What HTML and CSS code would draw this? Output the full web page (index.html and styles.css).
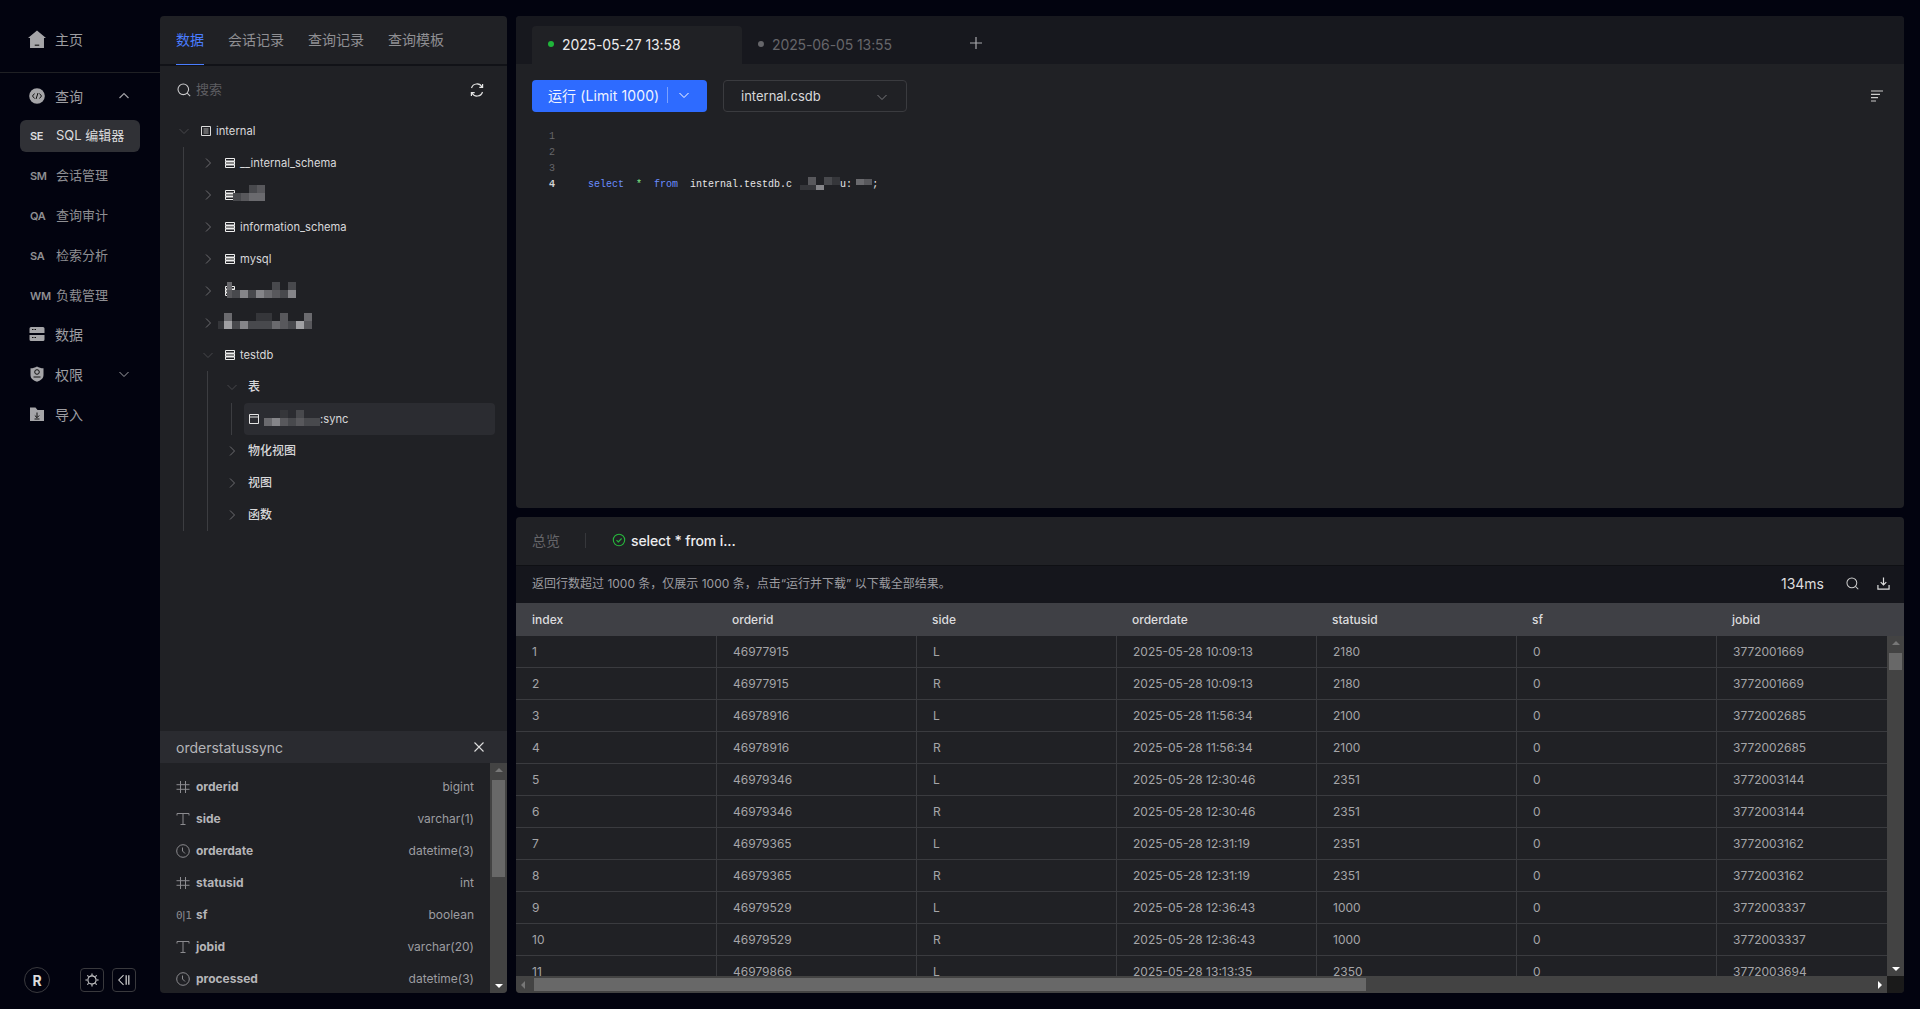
FILE: index.html
```html
<!DOCTYPE html>
<html lang="zh-CN">
<head>
<meta charset="utf-8">
<title>SQL 编辑器</title>
<link rel="stylesheet" href="styles.css">
</head>
<body>
<svg class="sprite" width="0" height="0" aria-hidden="true">
  <symbol id="chev-r" viewBox="0 0 12 12"><path d="M4 1.500 8.500 6 4 10.500" fill="none" stroke="currentColor" stroke-width="1"/></symbol>
  <symbol id="chev-d" viewBox="0 0 12 12"><path d="M1.500 4 6 8.500 10.500 4" fill="none" stroke="currentColor" stroke-width="1"/></symbol>
  <symbol id="chev-u" viewBox="0 0 12 12"><path d="M1.500 8 6 3.500 10.500 8" fill="none" stroke="currentColor" stroke-width="1.200"/></symbol>
  <symbol id="db" viewBox="0 0 10 10"><path d="M.5.500h9v2.500h-9zM.5 3.500h9v3h-9zM.5 7h9v2.500h-9z" fill="none" stroke="#eee" stroke-width="1"/><path d="M1 4h8v2H1z" fill="#888"/></symbol>
  <symbol id="hash" viewBox="0 0 14 14"><path d="M4.500 1v12M9.500 1v12M.5 4.700h13M.5 9.300h13" fill="none" stroke="#8b8b8f" stroke-width="1"/></symbol>
  <symbol id="type" viewBox="0 0 14 14"><path d="M1 3.500V1.500h12v2M7 1.500v11M4.500 12.500h5" fill="none" stroke="#8b8b8f" stroke-width="1"/></symbol>
  <symbol id="clock" viewBox="0 0 14 14"><circle cx="7" cy="7" r="6.300" fill="none" stroke="#8b8b8f" stroke-width="1"/><path d="M6.500 3.500V7l2.500 2.500" fill="none" stroke="#8b8b8f" stroke-width="1"/></symbol>
  <symbol id="search" viewBox="0 0 14 14"><circle cx="6.300" cy="6.300" r="5.300" fill="none" stroke="currentColor" stroke-width="1.100"/><path d="m10.200 10.200 3 3" stroke="currentColor" stroke-width="1.100"/></symbol>
</svg>

<div class="app">
  <aside class="nav">
    <div class="nav-top">
      <a class="nav-item"><svg class="nav-ico nav-home" viewBox="0 0 16 16"><path d="M8 .5 16 7.200h-1.800V16H1.800V7.200H0z" fill="#a5a5a8"/><path d="M6 13h4v1H6z" fill="#111"/></svg><span>主页</span></a>
      <div class="nav-sep"></div>
      <a class="nav-item nav-group"><svg class="nav-ico" viewBox="0 0 16 16"><circle cx="8" cy="8" r="7.800" fill="#a5a5a8"/><path d="M5.500 5.500 3.500 8l2 2.500M10.500 5.500l2 2.500-2 2.500M9 5 7 11" fill="none" stroke="#111" stroke-width="1"/></svg><span>查询</span><svg class="nav-chev"><use href="#chev-u"/></svg></a>
      <a class="nav-sub active"><b>SE</b><span>SQL 编辑器</span></a>
      <a class="nav-sub"><b>SM</b><span>会话管理</span></a>
      <a class="nav-sub"><b>QA</b><span>查询审计</span></a>
      <a class="nav-sub"><b>SA</b><span>检索分析</span></a>
      <a class="nav-sub"><b>WM</b><span>负载管理</span></a>
      <a class="nav-item nav-low"><svg class="nav-ico" viewBox="0 0 16 16"><path d="M2 1h12a1.500 1.500 0 0 1 1.500 1.500V7H.5V2.500A1.500 1.500 0 0 1 2 1zM.5 9h15v4.500A1.500 1.500 0 0 1 14 15H2a1.500 1.500 0 0 1-1.500-1.500z" fill="#a5a5a8"/><path d="M3 3.500h1.500M5.500 3.500H7M3 11.500h1.500M5.500 11.500H7" stroke="#111" stroke-width="1.200"/></svg><span>数据</span></a>
      <a class="nav-item nav-low"><svg class="nav-ico" viewBox="0 0 16 16"><path d="M8 .5c2 1.200 4 1.700 6.500 1.800V9c0 3.500-3 5.700-6.500 6.800C4.500 14.700 1.500 12.500 1.500 9V2.300C4 2.200 6 1.700 8 .5z" fill="#a5a5a8"/><circle cx="8" cy="6" r="2.300" fill="none" stroke="#111"/><path d="M4.500 11h7" stroke="#111"/></svg><span>权限</span><svg class="nav-chev"><use href="#chev-d"/></svg></a>
      <a class="nav-item nav-low"><svg class="nav-ico" viewBox="0 0 16 16"><path d="M1 1.500h5.500L8.500 4H15v11H1z" fill="#a5a5a8"/><path d="M8 6.500v5M5.800 9.500 8 11.700l2.200-2.200M5.500 13h5" fill="none" stroke="#111" stroke-width="1"/></svg><span>导入</span></a>
    </div>
    <div class="nav-foot">
      <span class="avatar">R</span>
      <span class="foot-btn"><svg viewBox="0 0 16 16"><circle cx="8" cy="8" r="4.700" fill="none" stroke="#ddd" stroke-width="1.200"/><path d="M8 .5v2M8 13.500v2M.5 8h2M13.500 8h2M2.700 2.700l1.400 1.400M11.900 11.900l1.400 1.400M2.700 13.300l1.400-1.400M11.900 4.100l1.400-1.400" stroke="#ddd" stroke-width="1.200"/></svg></span>
      <span class="foot-btn"><svg viewBox="0 0 16 16"><path d="M7.500 2.500 2 8l5.500 5.500" fill="none" stroke="#ccc" stroke-width="1.200"/><path d="M10.500 2.500v11M13.500 2.500v11" stroke="#ccc" stroke-width="1.500"/></svg></span>
    </div>
  </aside>

  <section class="left">
    <div class="left-tabs">
      <a class="ltab on">数据</a><a class="ltab">会话记录</a><a class="ltab">查询记录</a><a class="ltab">查询模板</a>
    </div>
    <div class="search">
      <svg class="search-ico"><use href="#search"/></svg>
      <span class="search-ph">搜索</span>
      <svg class="refresh" viewBox="0 0 14 14"><path d="M1.500 5A5.700 5.700 0 0 1 12 4M12.500 9A5.700 5.700 0 0 1 2 10" fill="none" stroke="#e4e4e4" stroke-width="1.200"/><path d="M12.600 1v3.400H9.300M1.400 13V9.600h3.300" fill="none" stroke="#e4e4e4" stroke-width="1.200"/></svg>
    </div>
    <div class="tree">
      <div class="tr r0"><svg class="tw dim"><use href="#chev-d"/></svg><svg class="ti" viewBox="0 0 10 10"><path d="M.5.500h9v9h-9z" fill="none" stroke="#ddd"/><path d="M2.500 3h5M2.500 5h5M2.500 7h5" stroke="#aaa"/></svg><span>internal</span></div>
      <div class="guide-a">
        <div class="tr r1"><svg class="tw"><use href="#chev-r"/></svg><svg class="ti"><use href="#db"/></svg><span>__internal_schema</span></div>
        <div class="tr r1"><svg class="tw"><use href="#chev-r"/></svg><svg class="ti"><use href="#db"/></svg>
          <span class="mos m-a"><i></i><i></i><i class="g2"></i><i class="g3"></i><i class="g2"></i><i class="g3"></i><i class="g4"></i><i class="g4"></i></span></div>
        <div class="tr r1"><svg class="tw"><use href="#chev-r"/></svg><svg class="ti"><use href="#db"/></svg><span>information_schema</span></div>
        <div class="tr r1"><svg class="tw"><use href="#chev-r"/></svg><svg class="ti"><use href="#db"/></svg><span>mysql</span></div>
        <div class="tr r1"><svg class="tw"><use href="#chev-r"/></svg><svg class="ti"><use href="#db"/></svg>
          <span class="mos m-b"><i class="g4"></i><i></i><i></i><i></i><i></i><i></i><i class="g2"></i><i></i><i class="g2"></i>
          <i class="g3"></i><i class="g2"></i><i class="g5"></i><i class="g2"></i><i class="g5"></i><i class="g4"></i><i class="g3"></i><i class="g2"></i><i class="g5"></i></span></div>
        <div class="tr r1"><svg class="tw"><use href="#chev-r"/></svg>
          <span class="mos m-c"><i></i><i class="g4"></i><i></i><i></i><i></i><i class="g1"></i><i class="g1"></i><i></i><i class="g3"></i><i></i><i></i><i class="g4"></i>
          <i class="g1"></i><i class="g6"></i><i class="g2"></i><i class="g5"></i><i class="g2"></i><i class="g2"></i><i class="g2"></i><i class="g4"></i><i class="g3"></i><i class="g2"></i><i class="g6"></i><i class="g3"></i></span></div>
        <div class="tr r1"><svg class="tw dim"><use href="#chev-d"/></svg><svg class="ti"><use href="#db"/></svg><span>testdb</span></div>
        <div class="guide-b">
          <div class="tr r2"><svg class="tw dim"><use href="#chev-d"/></svg><span>表</span></div>
          <div class="guide-c">
            <div class="tr r3 sel"><svg class="ti" viewBox="0 0 10 10"><path d="M.5.500h9v9h-9zM.5 3h9" fill="none" stroke="#e4e4e4"/></svg>
              <span class="mos m-d"><i></i><i></i><i class="g1"></i><i></i><i class="g2"></i><i></i><i></i>
              <i class="g4"></i><i class="g5"></i><i class="g3"></i><i class="g2"></i><i class="g3"></i><i class="g2"></i><i class="g2"></i></span><span>:sync</span></div>
          </div>
          <div class="tr r2"><svg class="tw"><use href="#chev-r"/></svg><span>物化视图</span></div>
          <div class="tr r2"><svg class="tw"><use href="#chev-r"/></svg><span>视图</span></div>
          <div class="tr r2"><svg class="tw"><use href="#chev-r"/></svg><span>函数</span></div>
        </div>
      </div>
    </div>
    <div class="detail">
      <div class="detail-head"><span>orderstatussync</span><svg class="close" viewBox="0 0 10 10"><path d="m.5.500 9 9M9.500.500l-9 9" stroke="#ddd" stroke-width="1.100"/></svg></div>
      <div class="detail-body">
        <div class="fields">
          <div class="field"><svg class="fi"><use href="#hash"/></svg><b>orderid</b><span>bigint</span></div>
          <div class="field"><svg class="fi"><use href="#type"/></svg><b>side</b><span>varchar(1)</span></div>
          <div class="field"><svg class="fi"><use href="#clock"/></svg><b>orderdate</b><span>datetime(3)</span></div>
          <div class="field"><svg class="fi"><use href="#hash"/></svg><b>statusid</b><span>int</span></div>
          <div class="field"><em class="fi-bool">0|1</em><b>sf</b><span>boolean</span></div>
          <div class="field"><svg class="fi"><use href="#type"/></svg><b>jobid</b><span>varchar(20)</span></div>
          <div class="field"><svg class="fi"><use href="#clock"/></svg><b>processed</b><span>datetime(3)</span></div>
        </div>
        <div class="vbar vbar-detail"><i class="arr arr-up"></i><i class="thumb"></i><i class="arr arr-down"></i></div>
      </div>
    </div>
  </section>

  <main class="right">
    <section class="editor">
      <div class="qtabs">
        <div class="qtab on"><i class="dot green"></i>2025-05-27 13:58</div>
        <div class="qtab"><i class="dot gray"></i>2025-06-05 13:55</div>
        <svg class="plus" viewBox="0 0 12 12"><path d="M6 0v12M0 6h12" stroke="#a8a8ac" stroke-width="1.200"/></svg>
      </div>
      <div class="toolbar">
        <div class="run"><span>运行 (Limit 1000)</span><i class="run-sep"></i><svg class="run-chev"><use href="#chev-d"/></svg></div>
        <div class="select"><span>internal.csdb</span><svg class="sel-chev"><use href="#chev-d"/></svg></div>
        <svg class="fmt" viewBox="0 0 14 12"><path d="M1 1h12M1 4.300h9M1 7.600h7M1 11h5" stroke="#ccc" stroke-width="1.200"/></svg>
      </div>
      <div class="code">
        <div class="ln"><i class="num">1</i></div>
        <div class="ln"><i class="num">2</i></div>
        <div class="ln"><i class="num">3</i></div>
        <div class="ln cur"><i class="num">4</i><code><span class="kw">select</span>  <span class="op">*</span>  <span class="kw">from</span>  internal.testdb.c<span class="mos m-e"><i></i><i></i><i class="g3"></i><i></i><i class="g2"></i><i class="g1"></i><i></i><i class="g1"></i><i class="g1"></i><i class="g5"></i><i></i><i></i></span>u:<span class="mos m-f"><i class="g4"></i><i class="g3"></i></span>;</code></div>
      </div>
    </section>

    <section class="results">
      <div class="rtabs">
        <span class="rt-over">总览</span><i class="rt-sep"></i>
        <svg class="ok" viewBox="0 0 14 14"><circle cx="7" cy="7" r="5.700" fill="none" stroke="#27b83c" stroke-width="1.100"/><path d="m4.500 7.200 1.800 1.800 3.300-3.500" fill="none" stroke="#27b83c" stroke-width="1.100"/></svg>
        <span class="rt-q">select * from i...</span>
      </div>
      <div class="info">
        <span class="info-msg">返回行数超过 1000 条，仅展示 1000 条，点击“运行并下载” 以下载全部结果。</span>
        <span class="ms">134ms</span>
        <svg class="info-ico"><use href="#search"/></svg>
        <svg class="info-ico dl" viewBox="0 0 14 14"><path d="M7 .5v8M4 5.500l3 3 3-3" fill="none" stroke="#ddd" stroke-width="1.300"/><path d="M1 8.500v4.500h12V8.500" fill="none" stroke="#ddd" stroke-width="1.300"/></svg>
      </div>
      <div class="row head"><span>index</span><span>orderid</span><span>side</span><span>orderdate</span><span>statusid</span><span>sf</span><span>jobid</span></div>
      <div class="grid-area">
        <div class="viewport">
          <div class="row"><span>1</span><span>46977915</span><span>L</span><span>2025-05-28 10:09:13</span><span>2180</span><span>0</span><span>3772001669</span></div>
          <div class="row"><span>2</span><span>46977915</span><span>R</span><span>2025-05-28 10:09:13</span><span>2180</span><span>0</span><span>3772001669</span></div>
          <div class="row"><span>3</span><span>46978916</span><span>L</span><span>2025-05-28 11:56:34</span><span>2100</span><span>0</span><span>3772002685</span></div>
          <div class="row"><span>4</span><span>46978916</span><span>R</span><span>2025-05-28 11:56:34</span><span>2100</span><span>0</span><span>3772002685</span></div>
          <div class="row"><span>5</span><span>46979346</span><span>L</span><span>2025-05-28 12:30:46</span><span>2351</span><span>0</span><span>3772003144</span></div>
          <div class="row"><span>6</span><span>46979346</span><span>R</span><span>2025-05-28 12:30:46</span><span>2351</span><span>0</span><span>3772003144</span></div>
          <div class="row"><span>7</span><span>46979365</span><span>L</span><span>2025-05-28 12:31:19</span><span>2351</span><span>0</span><span>3772003162</span></div>
          <div class="row"><span>8</span><span>46979365</span><span>R</span><span>2025-05-28 12:31:19</span><span>2351</span><span>0</span><span>3772003162</span></div>
          <div class="row"><span>9</span><span>46979529</span><span>L</span><span>2025-05-28 12:36:43</span><span>1000</span><span>0</span><span>3772003337</span></div>
          <div class="row"><span>10</span><span>46979529</span><span>R</span><span>2025-05-28 12:36:43</span><span>1000</span><span>0</span><span>3772003337</span></div>
          <div class="row"><span>11</span><span>46979866</span><span>L</span><span>2025-05-28 13:13:35</span><span>2350</span><span>0</span><span>3772003694</span></div>
        </div>
        <div class="vbar vbar-grid"><i class="arr arr-up"></i><i class="thumb"></i><i class="arr arr-down"></i></div>
      </div>
      <div class="hbar"><div class="hbar-track"><i class="arr arr-left"></i><i class="hthumb"></i><i class="arr arr-right"></i></div><i class="corner"></i></div>
    </section>
  </main>
</div>
</body>
</html>
```
FILE: styles.css
```css
* { box-sizing: border-box; }
html, body { margin: 0; height: 100%; }
body {
  background: #02030f;
  color: #d8d8da;
  font: 12px/1.5 Inter, "Noto Sans CJK SC", "Liberation Sans", sans-serif;
  overflow: hidden;
}
.sprite { display: block; height: 0; }
i, em { font-style: normal; }
.app { display: flex; height: 1009px; padding: 16px 16px 16px 0; }

/* nav */
.nav { width: 160px; flex: none; display: flex; flex-direction: column; justify-content: space-between; margin-top: -16px; margin-bottom: -16px; }
.nav-item { display: flex; align-items: center; height: 40px; padding-left: 29px; color: #9d9da1; font-size: 14px; }
.nav-item:first-child { height: 72px; padding-top: 6px; }
.nav-ico { width: 16px; height: 16px; margin-right: 10px; flex: none; }
.nav-home { width: 18px; height: 18px; margin: 0 9px 0 -1px; }
.nav-group { margin-bottom: 4px; }
.nav-sep { height: 1px; background: #1f2024; margin-bottom: 3px; }
.nav-chev { width: 12px; height: 12px; margin-left: 35px; color: #a0a0a4; }
.nav-sub { display: flex; align-items: center; width: 120px; height: 32px; margin: 0 0 8px 20px; padding-left: 10px; border-radius: 6px; color: #8f8f93; font-size: 13px; }
.nav-sub b { width: 26px; font-size: 11px; font-weight: 600; flex: none; letter-spacing: -.3px; }
.nav-sub.active { background: #303136; color: #dcdcde; }
.nav-sub + .nav-low { margin-top: -6px; }
.nav-foot { display: flex; align-items: center; height: 40px; margin-bottom: 9px; padding-left: 24px; }
.avatar { width: 26px; height: 26px; border: 1px solid #3a3a3e; border-radius: 50%; display: flex; align-items: center; justify-content: center; font-weight: 700; font-size: 14px; color: #dcdcde; margin-right: 30px; }
.foot-btn { width: 24px; height: 24px; border: 1px solid #39393d; border-radius: 4px; display: flex; align-items: center; justify-content: center; margin-right: 8px; }
.foot-btn svg { width: 14px; height: 14px; }

/* left panel */
.left { width: 347px; flex: none; display: flex; flex-direction: column; background: #202125; border-radius: 4px; overflow: hidden; }
.left-tabs { display: flex; height: 50px; padding-left: 16px; gap: 24px; border-bottom: 2px solid #111217; flex: none; }
.ltab { height: 48px; line-height: 47px; font-size: 14px; color: #8f8f93; }
.ltab.on { color: #4a7dff; border-bottom: 1px solid #4a7dff; height: 49px; }
.search { display: flex; align-items: center; height: 49px; padding: 0 23px 2px 17px; flex: none; }
.search-ico { width: 14px; height: 14px; color: #c9c9cb; margin-right: 5px; }
.search-ph { flex: 1; color: #5e5e62; font-size: 13px; }
.refresh { width: 14px; height: 14px; }
.tree { flex: 1; padding-left: 16px; font-size: 11.200px; color: #d8d8da; min-height: 0; }
.tr { display: flex; align-items: center; height: 32px; white-space: nowrap; }
.tw { width: 12px; height: 12px; color: #6c6c70; flex: none; margin-right: 11px; }
.tw.dim { color: #47474b; }
.ti { width: 10px; height: 10px; flex: none; margin-right: 5px; }
.r0 { padding-left: 2px; }
.guide-a { margin-left: 7px; border-left: 1px solid #3c3d41; }
.r1 { padding-left: 18px; }
.guide-b { margin-left: 23px; border-left: 1px solid #3c3d41; }
.r2 { padding-left: 18px; font-size: 12px; font-weight: 500; }
.r2 .tw { margin-right: 10px; }
.guide-c { margin-left: 23px; border-left: 1px solid #3c3d41; position: relative; }
.r3 { margin-left: 12px; padding-left: 5px; width: 251px; background: #2b2c31; border-radius: 4px; }

.mos { display: grid; grid-auto-rows: 8px; }
.m-a { grid-template-columns: repeat(4, 8px); margin: -4px 0 0 -7px; }
.m-b { grid-template-columns: 5px repeat(8, 8px); margin: -2px 0 0 -13px; }
.m-c { grid-template-columns: 6px repeat(11, 8px); margin: -4px 0 0 -7px; }
.m-d { grid-template-columns: repeat(7, 8px); margin: -3px 0 0 0; }
.m-e { display: inline-grid; grid-template-columns: repeat(6, 8px); grid-template-rows: 8px 5px; grid-auto-rows: auto; vertical-align: top; }
.m-f { display: inline-grid; grid-template-columns: repeat(2, 8px); grid-auto-rows: 6px; vertical-align: top; margin: 2px 0 0 4px; }
.g1 { background: #35363a; }
.g2 { background: #48494d; }
.g3 { background: #58585c; }
.g4 { background: #6a6a6e; }
.g5 { background: #858589; }
.g6 { background: #a0a0a3; }

/* detail */
.detail { height: 262px; flex: none; display: flex; flex-direction: column; }
.detail-head { height: 32px; flex: none; background: #2a2b30; display: flex; align-items: center; justify-content: space-between; padding: 0 23px 0 16px; font-size: 14px; color: #b5b5b8; }
.close { width: 10px; height: 10px; }
.detail-body { flex: 1; display: flex; min-height: 0; }
.fields { flex: 1; padding: 8px 16px 0 16px; overflow: hidden; }
.field { display: flex; align-items: center; height: 32px; font-size: 12px; color: #9d9da1; }
.field b { flex: 1; font-weight: 700; color: #b5b5b8; }
.fi { width: 14px; height: 14px; margin-right: 6px; flex: none; }
.fi-bool { width: 20px; flex: none; font: 11px "DejaVu Sans Mono", monospace; letter-spacing: -2px; color: #8b8b8f; }
.vbar { width: 17px; flex: none; background: #434343; display: flex; flex-direction: column; align-items: center; padding: 5px 0; }
.vbar .thumb { width: 13px; margin-top: 8px; margin-bottom: auto; }
.vbar-detail .thumb { height: 97px; background: #686868; }
.vbar-grid .thumb { height: 17px; background: #686868; }
.arr { display: block; width: 0; height: 0; border: 4px solid transparent; flex: none; }
.arr-up { border-bottom-color: #777; border-top-width: 0; }
.arr-down { border-top-color: #fff; border-bottom-width: 0; }
.arr-left { border-right-color: #777; border-left-width: 0; }
.arr-right { border-left-color: #fff; border-right-width: 0; margin-left: auto; }

/* right */
.right { flex: 1; min-width: 0; display: flex; flex-direction: column; gap: 9px; margin-left: 9px; }
.editor { height: 492px; flex: none; background: #202125; border-radius: 4px; overflow: hidden; }
.qtabs { display: flex; align-items: flex-end; height: 48px; padding-left: 16px; background: #17181e; }
.qtab { display: flex; align-items: center; width: 210px; height: 38px; padding: 0 0 2px 16px; font-size: 14px; letter-spacing: -.1px; color: #66666a; border-radius: 4px 4px 0 0; }
.qtab + .qtab { width: 226px; }
.qtab.on { background: #202125; color: #ececee; }
.dot { width: 6px; height: 6px; border-radius: 50%; margin-right: 8px; }
.dot.green { background: #1fb53a; }
.dot.gray { background: #66666a; }
.plus { width: 12px; height: 12px; margin: 0 0 15px 2px; }
.toolbar { display: flex; align-items: center; padding: 16px 20px 0 16px; }
.run { display: flex; align-items: center; width: 175px; height: 32px; padding: 0 0 2px 16px; background: #2e6bff; border-radius: 4px; font-size: 14px; letter-spacing: .1px; color: #eef3ff; }
.run-sep { width: 1px; height: 16px; background: #7aa1ff; margin: 0 10px 0 8px; }
.run-chev { width: 12px; height: 12px; color: #fff; }
.select { display: flex; align-items: center; justify-content: space-between; width: 184px; height: 32px; margin-left: 16px; padding: 1px 18px 0 17px; border: 1px solid #3a3b3f; border-radius: 4px; font-size: 13px; color: #d8d8da; }
.sel-chev { width: 12px; height: 12px; color: #77777b; }
.fmt { width: 14px; height: 12px; margin-left: auto; }
.code { padding-top: 17px; font: 10px/16px "Liberation Mono", "DejaVu Sans Mono", monospace; color: #e6e6e8; }
.ln { display: flex; height: 16px; white-space: pre; }
.num { width: 39px; flex: none; text-align: right; color: #66666a; }
.ln.cur .num { color: #d4d4d6; font-weight: 700; }
.ln code { font: inherit; margin-left: 33px; }
.kw { color: #6a8dff; }
.op { color: #7ee787; }

.results { flex: 1; min-height: 0; background: #202125; border-radius: 4px; overflow: hidden; display: flex; flex-direction: column; }
.rtabs { display: flex; align-items: center; height: 49px; flex: none; padding: 0 16px 2px; border-bottom: 1px solid #0f1014; }
.rt-over { color: #66666a; font-size: 14px; }
.rt-sep { width: 1px; height: 15px; background: #36373b; margin: 0 26px 0 25px; }
.ok { width: 14px; height: 14px; margin-right: 5px; }
.rt-q { font-size: 14px; font-weight: 500; letter-spacing: -.1px; color: #ececee; }
.info { display: flex; align-items: center; height: 37px; flex: none; padding: 0 14px 2px 16px; background: #15161c; color: #9d9da1; }
.info-msg { flex: 1; font-size: 12px; }
.ms { font-size: 14px; color: #dcdcde; margin-right: 22px; }
.info-ico { width: 13px; height: 13px; color: #ccc; }
.info-ico.dl { margin-left: 18px; }
.grid-area { flex: 1; min-height: 0; display: flex; }
.viewport { flex: 1; min-width: 0; min-height: 0; overflow: hidden; }
.row { display: grid; grid-template-columns: 201px repeat(6, 200px); height: 32px; line-height: 32px; color: #a5a5a8; border-bottom: 1px solid #3a3b3f; white-space: nowrap; }
.row span { padding-left: 16px; border-right: 1px solid #3a3b3f; overflow: hidden; }
.row span:last-child { border-right: 0; }
.row.head { height: 33px; line-height: 34px; flex: none; grid-template-columns: repeat(7, 200px); background: #3f4045; color: #dcdcde; font-weight: 500; border: 0; }
.row.head span { border: 0; }
.hbar { height: 17px; flex: none; display: flex; }
.hbar-track { flex: 1; min-width: 0; background: #434343; display: flex; align-items: center; padding: 0 5px; }
.hthumb { width: 832px; height: 13px; background: #686868; margin-left: 9px; flex: none; }
.corner { width: 17px; flex: none; background: #1a1a1a; }
```
